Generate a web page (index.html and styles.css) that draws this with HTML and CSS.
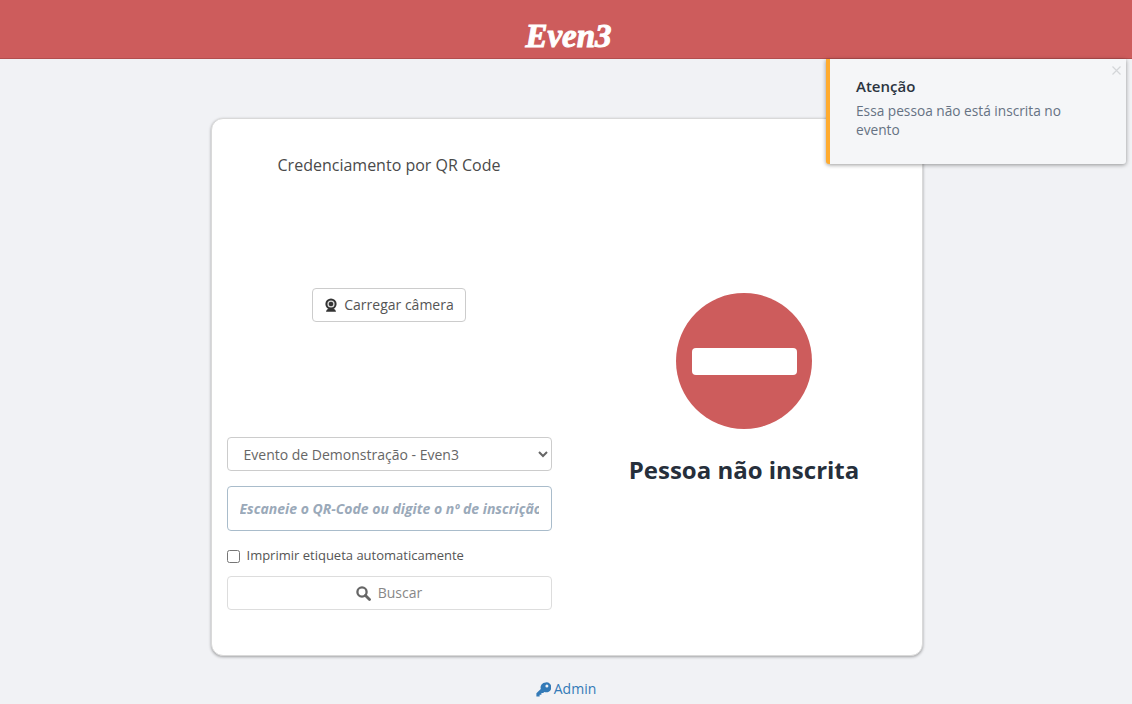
FILE: index.html
```html
<!DOCTYPE html>
<html lang="pt-BR">
<head>
<meta charset="utf-8">
<title>Credenciamento por QR Code - Even3</title>
<link rel="stylesheet" href="styles.css">
</head>
<body>
<header class="topbar"><span class="logo">Even3</span></header>

<div class="toast">
  <span class="toast-close">
    <svg width="9" height="9" viewBox="0 0 9 9"><path d="M.5.5l8 8M8.5.5l-8 8" stroke="#d4d6d9" stroke-width="1.2" fill="none"/></svg>
  </span>
  <div class="toast-title">Atenção</div>
  <div class="toast-text">Essa pessoa não está inscrita no evento</div>
</div>

<main class="card">
  <section class="left-col">
    <h1 class="card-title">Credenciamento por QR Code</h1>
    <div class="camera-area">
      <button class="btn" type="button">
        <svg class="cam-icon" width="14" height="14" viewBox="0 0 14 14">
          <circle cx="7" cy="6" r="5.6" fill="#333"/>
          <circle cx="7" cy="6" r="3.6" fill="#ddd"/>
          <circle cx="7" cy="6" r="2.3" fill="#333"/>
          <path d="M2 13.8c.3-1.7 1.2-2.5 2.3-2.8h5.4c1.1.3 2 1.1 2.3 2.8z" fill="#333"/>
        </svg>
        Carregar câmera
      </button>
    </div>
    <select class="event-select">
      <option>Evento de Demonstração - Even3</option>
    </select>
    <input class="code-input" type="text" placeholder="Escaneie o QR-Code ou digite o nº de inscrição">
    <label class="print-check"><input type="checkbox"> Imprimir etiqueta automaticamente</label>
    <button class="btn btn-search" type="button">
      <svg width="15" height="15" viewBox="0 0 15 15">
        <circle cx="6" cy="6" r="4.6" fill="none" stroke="#666" stroke-width="2.3"/>
        <path d="M9.5 9.5l4 4" stroke="#666" stroke-width="2.8" stroke-linecap="round"/>
      </svg>
      Buscar
    </button>
  </section>

  <section class="right-col">
    <div class="stop-sign"><span class="stop-bar"></span></div>
    <h2 class="status">Pessoa não inscrita</h2>
  </section>
</main>

<footer class="admin">
  <a href="#">
    <svg width="15" height="15" viewBox="0 0 15 15">
      <path d="M9.6.4a5 5 0 0 0-4.8 6.5L.4 11.3v3.3h3.2v-1.8h1.8v-1.800h1.800l1.100-1.100A5 5 0 1 0 9.600.4zm1.300 2.200a1.500 1.500 0 1 1 0 3 1.500 1.500 0 0 1 0-3z" fill="#337ab7"/>
    </svg>
    Admin
  </a>
</footer>
</body>
</html>
```

FILE: styles.css
```css
* { box-sizing: border-box; }
html, body { height: 100%; }
body {
	margin: 0;
	background: #f1f2f5;
	font-family: "Open Sans", "Liberation Sans", sans-serif;
	font-size: 14px;
	color: #333;
	overflow: hidden;
}

.topbar {
	height: 59px;
	background: #cd5c5c;
	border-bottom: 1px solid #b24e4e;
	display: flex;
	justify-content: center;
	align-items: center;
}
.logo {
	font-family: "Liberation Serif", serif;
	font-style: italic;
	font-weight: bold;
	font-size: 33px;
	line-height: 1;
	color: #fff;
	-webkit-text-stroke: 1px #fff;
	margin: 15px 0 0 5px;
}

.toast {
	position: absolute;
	top: 59px;
	left: 826px;
	width: 300px;
	height: 105px;
	padding: 17px 26px 0;
	background: #f5f6f8;
	border-left: 4px solid #ffab2e;
	border-radius: 0 0 3px 3px;
	box-shadow: 0 1px 4px rgba(0,0,0,.4);
}
.toast-close { position: absolute; top: 7px; right: 5px; line-height: 0; }
.toast-title { font-size: 15px; font-weight: 600; line-height: 20px; color: #2b3440; }
.toast-text { font-size: 13.7px; line-height: 19px; margin-top: 5px; color: #667283; }

.card {
	width: 712px;
	height: 538px;
	margin: 59px 0 0 211px;
	padding: 0 1px 0 14.5px;
	background: #fff;
	border: 1px solid #d9d9d9;
	border-radius: 12px;
	box-shadow: 0 1px 3px rgba(0,0,0,.35);
	display: grid;
	grid-template-columns: 325px 1fr;
	column-gap: 15.5px;
}

.left-col { display: flex; flex-direction: column; }
.card-title {
	margin: 36px 0 0;
	font-size: 16px;
	font-weight: 400;
	line-height: 20px;
	text-align: center;
	color: #4a4a4a;
}
.camera-area {
	height: 262px;
	display: flex;
	justify-content: center;
	padding-top: 113px;
}

.btn {
	font-family: inherit;
	font-size: 14px;
	color: #555;
	background: #fff;
	border: 1px solid #ccc;
	border-radius: 4px;
	height: 34px;
	padding: 0 11.5px 2px;
	display: inline-flex;
	align-items: center;
	justify-content: center;
	gap: 6px;
}
.btn svg { margin-top: 2px; }
.btn-search {
	width: 100%;
	color: #888;
	border-color: #ddd;
	margin-top: 10px;
	gap: 7px;
}

.event-select {
	height: 34px;
	padding: 0 12px;
	font-family: inherit;
	font-size: 14px;
	color: #666;
	background: #fff;
	border: 1px solid #ccc;
	border-radius: 4px;
}
.code-input {
	height: 45px;
	margin-top: 15px;
	padding: 0 12px;
	font-family: inherit;
	font-size: 14px;
	border: 1px solid #a9bccb;
	border-radius: 4px;
}
.code-input::placeholder { color: #9aa9b9; font-style: italic; font-weight: 700; opacity: 1; }

.print-check {
	display: flex;
	align-items: center;
	gap: 7px;
	height: 18px;
	margin: 15px 0 2px;
	font-size: 13px;
	color: #555;
}
.print-check input { margin: 2px 0 0; width: 13px; height: 13px; }

.right-col { display: flex; flex-direction: column; align-items: center; padding-top: 174px; }
.stop-sign {
	width: 136px;
	height: 136px;
	border-radius: 50%;
	background: #cd5c5c;
	display: flex;
	align-items: center;
	justify-content: center;
}
.stop-bar { width: 105px; height: 27px; background: #fff; border-radius: 4px; }
.status {
	margin: 25px 0 0;
	font-size: 24px;
	font-weight: 700;
	line-height: 32px;
	color: #262f3b;
}

.admin { text-align: center; margin-top: 23px; }
.admin a { color: #337ab7; text-decoration: none; display: inline-flex; align-items: center; gap: 3px; line-height: 20px; }
```
